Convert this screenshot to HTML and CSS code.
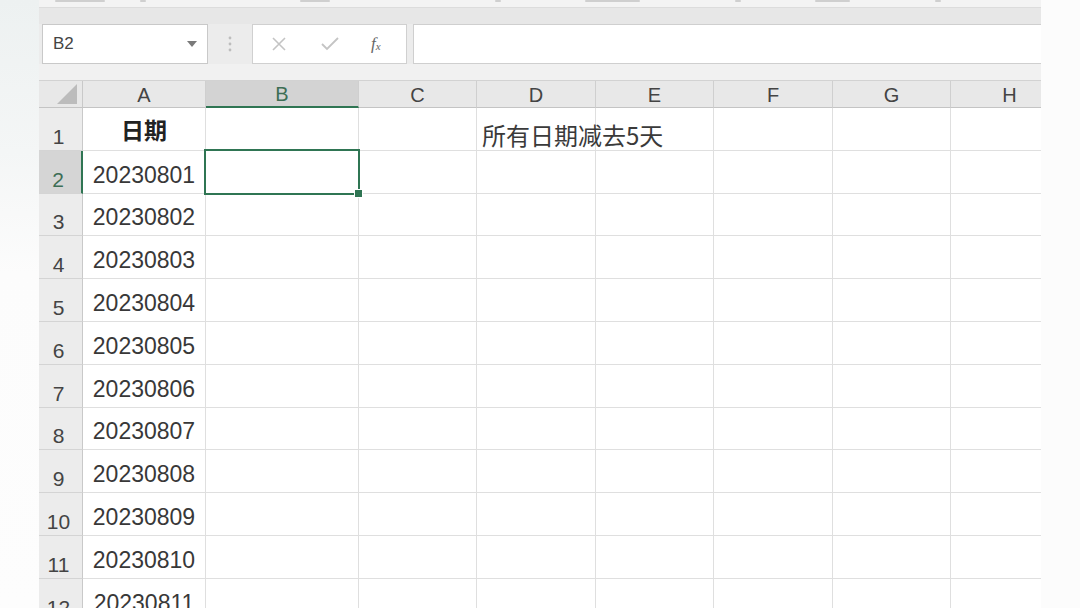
FILE: index.html
```html
<!DOCTYPE html>
<html lang="zh-CN">
<head>
    <meta charset="UTF-8">
    <title>日期</title>
    <link rel="stylesheet" href="styles.css">
</head>
<body>
    <div class="screen">
        <div class="gutter gutter-left"></div>

        <div class="app">
            <!-- ribbon is scrolled off, only the bottoms of group labels peek out -->
            <div class="ribbon">
                <div class="ribbon-marks">
                    <span class="mark w50"></span><span class="mark w10"></span>
                    <span class="mark w30"></span><span class="mark w10"></span>
                    <span class="mark w55"></span><span class="mark w10"></span>
                    <span class="mark w35"></span><span class="mark w10"></span>
                </div>
            </div>
            <div class="band"></div>

            <div class="formula-bar">
                <div class="name-box">
                    <span>B2</span>
                    <svg class="caret" width="10" height="6" viewBox="0 0 10 6"><polygon points="0,0 10,0 5,6" fill="#7a7a7a"/></svg>
                </div>
                <div class="grip">
                    <svg width="4" height="18" viewBox="0 0 4 18">
                        <circle cx="2" cy="3" r="1.4" fill="#bdbdbd"/>
                        <circle cx="2" cy="9" r="1.4" fill="#bdbdbd"/>
                        <circle cx="2" cy="15" r="1.4" fill="#bdbdbd"/>
                    </svg>
                </div>
                <div class="fx-box">
                    <svg width="16" height="16" viewBox="0 0 16 16"><path d="M2 2 L14 14 M14 2 L2 14" stroke="#c4c4c4" stroke-width="1.6" fill="none"/></svg>
                    <svg width="18" height="16" viewBox="0 0 18 16"><path d="M1 8 L6 13 L17 2" stroke="#c4c4c4" stroke-width="1.8" fill="none"/></svg>
                    <span class="fx">f<sub>x</sub></span>
                </div>
                <div class="formula-input"></div>
            </div>

            <div class="sheet">
                <div class="row head-row">
                    <div class="corner">
                        <svg width="20" height="20" viewBox="0 0 20 20"><polygon points="20,0 20,20 0,20" fill="#bcbcbc"/></svg>
                    </div>
                    <div class="ch">A</div>
                    <div class="ch ch-sel">B</div>
                    <div class="ch">C</div>
                    <div class="ch">D</div>
                    <div class="ch">E</div>
                    <div class="ch">F</div>
                    <div class="ch">G</div>
                    <div class="ch">H</div>
                </div>

                <div class="row">
                    <div class="rh">1</div>
                    <div class="c bold">日期</div>
                    <div class="c"></div>
                    <div class="c"></div>
                    <div class="c note">所有日期减去5天</div>
                    <div class="c"></div>
                    <div class="c"></div>
                    <div class="c"></div>
                    <div class="c"></div>
                </div>
                <div class="row">
                    <div class="rh rh-sel">2</div>
                    <div class="c">20230801</div>
                    <div class="c sel"></div>
                    <div class="c"></div>
                    <div class="c"></div>
                    <div class="c"></div>
                    <div class="c"></div>
                    <div class="c"></div>
                    <div class="c"></div>
                </div>
                <div class="row">
                    <div class="rh">3</div>
                    <div class="c">20230802</div>
                    <div class="c"></div><div class="c"></div><div class="c"></div><div class="c"></div>
                    <div class="c"></div><div class="c"></div><div class="c"></div>
                </div>
                <div class="row">
                    <div class="rh">4</div>
                    <div class="c">20230803</div>
                    <div class="c"></div><div class="c"></div><div class="c"></div><div class="c"></div>
                    <div class="c"></div><div class="c"></div><div class="c"></div>
                </div>
                <div class="row">
                    <div class="rh">5</div>
                    <div class="c">20230804</div>
                    <div class="c"></div><div class="c"></div><div class="c"></div><div class="c"></div>
                    <div class="c"></div><div class="c"></div><div class="c"></div>
                </div>
                <div class="row">
                    <div class="rh">6</div>
                    <div class="c">20230805</div>
                    <div class="c"></div><div class="c"></div><div class="c"></div><div class="c"></div>
                    <div class="c"></div><div class="c"></div><div class="c"></div>
                </div>
                <div class="row">
                    <div class="rh">7</div>
                    <div class="c">20230806</div>
                    <div class="c"></div><div class="c"></div><div class="c"></div><div class="c"></div>
                    <div class="c"></div><div class="c"></div><div class="c"></div>
                </div>
                <div class="row">
                    <div class="rh">8</div>
                    <div class="c">20230807</div>
                    <div class="c"></div><div class="c"></div><div class="c"></div><div class="c"></div>
                    <div class="c"></div><div class="c"></div><div class="c"></div>
                </div>
                <div class="row">
                    <div class="rh">9</div>
                    <div class="c">20230808</div>
                    <div class="c"></div><div class="c"></div><div class="c"></div><div class="c"></div>
                    <div class="c"></div><div class="c"></div><div class="c"></div>
                </div>
                <div class="row">
                    <div class="rh">10</div>
                    <div class="c">20230809</div>
                    <div class="c"></div><div class="c"></div><div class="c"></div><div class="c"></div>
                    <div class="c"></div><div class="c"></div><div class="c"></div>
                </div>
                <div class="row">
                    <div class="rh">11</div>
                    <div class="c">20230810</div>
                    <div class="c"></div><div class="c"></div><div class="c"></div><div class="c"></div>
                    <div class="c"></div><div class="c"></div><div class="c"></div>
                </div>
                <div class="row">
                    <div class="rh">12</div>
                    <div class="c">20230811</div>
                    <div class="c"></div><div class="c"></div><div class="c"></div><div class="c"></div>
                    <div class="c"></div><div class="c"></div><div class="c"></div>
                </div>
            </div>
        </div>

        <div class="gutter gutter-right"></div>
    </div>
</body>
</html>
```

FILE: styles.css
```css
/* spreadsheet screen */
body {
    margin: 0;
    padding: 0;
    font-family: "Liberation Sans", "Noto Sans CJK SC", sans-serif;
    background-color: #fff;
}

.screen {
    display: flex;
    width: 1080px;
    height: 608px;
    overflow: hidden;
}

.gutter {
    flex: none;
    height: 100%;
}

.gutter-left {
    width: 39px;
    background: linear-gradient(to bottom, #edf1f1 0%, #f4f6f6 25%, #fcfcfc 45%, #fdfdfd 100%);
}

.gutter-right {
    width: 39px;
    background-color: #fcfcfc;
}

.app {
    flex: none;
    width: 1002px;
    display: flex;
    flex-direction: column;
    background-color: #f1f1f1;
    overflow: hidden;
}

/* ribbon remains */
.ribbon {
    height: 7px;
    overflow: hidden;
    background-color: #f3f3f3;
    border-bottom: 1px solid #dcdcdc;
}

.ribbon-marks {
    display: grid;
    grid-template-columns: 85px 160px 195px 90px 150px 80px 120px 60px;
    align-items: start;
    padding-left: 16px;
}

.mark {
    height: 2px;
    background-color: #cfcfcf;
    border-radius: 1px;
}

.w10 { width: 6px; }
.w30 { width: 30px; }
.w35 { width: 35px; }
.w50 { width: 50px; }
.w55 { width: 55px; }

.band {
    height: 16px;
    background-color: #e7e7e7;
}

/* formula bar */
.formula-bar {
    display: flex;
    align-items: stretch;
    height: 40px;
    padding-left: 3px;
    background-color: #ececec;
}

.name-box {
    width: 166px;
    box-sizing: border-box;
    display: flex;
    align-items: center;
    justify-content: space-between;
    padding: 0 10px 0 10px;
    background-color: #fff;
    border: 1px solid #c9c9c9;
    font-size: 17px;
    color: #444;
}

.grip {
    width: 44px;
    display: flex;
    align-items: center;
    justify-content: center;
}

.fx-box {
    width: 155px;
    box-sizing: border-box;
    display: flex;
    align-items: center;
    gap: 34px;
    padding-left: 18px;
    background-color: #fff;
    border: 1px solid #d0d0d0;
}

.fx {
    font-family: "Liberation Serif", serif;
    font-style: italic;
    font-size: 17px;
    color: #666;
    margin-left: -2px;
}

.fx sub {
    font-size: 11px;
    vertical-align: -1px;
}

.formula-input {
    flex: 1;
    margin-left: 6px;
    background-color: #fff;
    border-top: 1px solid #cfcfcf;
    border-bottom: 1px solid #cfcfcf;
    border-left: 1px solid #cfcfcf;
}

/* grid */
.sheet {
    margin-top: 16px;
    flex: 1;
    background-color: #fff;
    overflow: hidden;
    border-top: 1px solid #d2d2d2;
}

.row {
    display: grid;
    grid-template-columns: 44px 123px 153px 118px 119px 118px 119px 118px 118px;
    height: 42.8px;
}

.head-row {
    height: 27px;
    background-color: #e8e8e8;
}

.corner {
    display: flex;
    align-items: flex-end;
    justify-content: flex-end;
    padding: 0 5px 3px 0;
    border-right: 1px solid #c9c9c9;
    border-bottom: 1px solid #c4c4c4;
}

.ch {
    display: flex;
    align-items: flex-end;
    justify-content: center;
    padding-bottom: 2px;
    box-sizing: border-box;
    font-size: 20px;
    line-height: 1;
    color: #444;
    border-right: 1px solid #cfcfcf;
    border-bottom: 1px solid #c4c4c4;
}

.ch-sel {
    background-color: #d3d3d3;
    color: #3d6e55;
    border-bottom: 2px solid #2f7553;
}

.rh {
    display: flex;
    align-items: flex-end;
    justify-content: center;
    padding: 0 4px 3px 0;
    box-sizing: border-box;
    font-size: 21px;
    line-height: 1;
    color: #444;
    background-color: #ececec;
    border-right: 1px solid #c9c9c9;
    border-bottom: 1px solid #d4d4d4;
}

.rh-sel {
    background-color: #d5d5d5;
    color: #3d6e55;
    border-right: 2px solid #2f7553;
}

.c {
    display: flex;
    align-items: flex-end;
    justify-content: center;
    padding-bottom: 6px;
    box-sizing: border-box;
    font-size: 23px;
    line-height: 1;
    color: #383838;
    white-space: nowrap;
    border-right: 1px solid #dfdfdf;
    border-bottom: 1px solid #dfdfdf;
}

.bold {
    font-weight: bold;
    color: #222;
    padding-bottom: 7px;
}

.note {
    justify-content: flex-start;
    padding-left: 5px;
    padding-bottom: 3px;
    font-size: 24px;
    font-family: "Noto Sans CJK SC", sans-serif;
    color: #3a3a3a;
    overflow: visible;
}

/* active cell */
.sel {
    position: relative;
}

.sel::after {
    content: "";
    position: absolute;
    left: -2px;
    top: -2px;
    right: -2px;
    bottom: -2px;
    border: 2.5px solid #2f7553;
}

.sel::before {
    content: "";
    position: absolute;
    right: -5px;
    bottom: -5px;
    width: 7px;
    height: 7px;
    background-color: #2f7553;
    border: 1px solid #fff;
    z-index: 1;
}
```
